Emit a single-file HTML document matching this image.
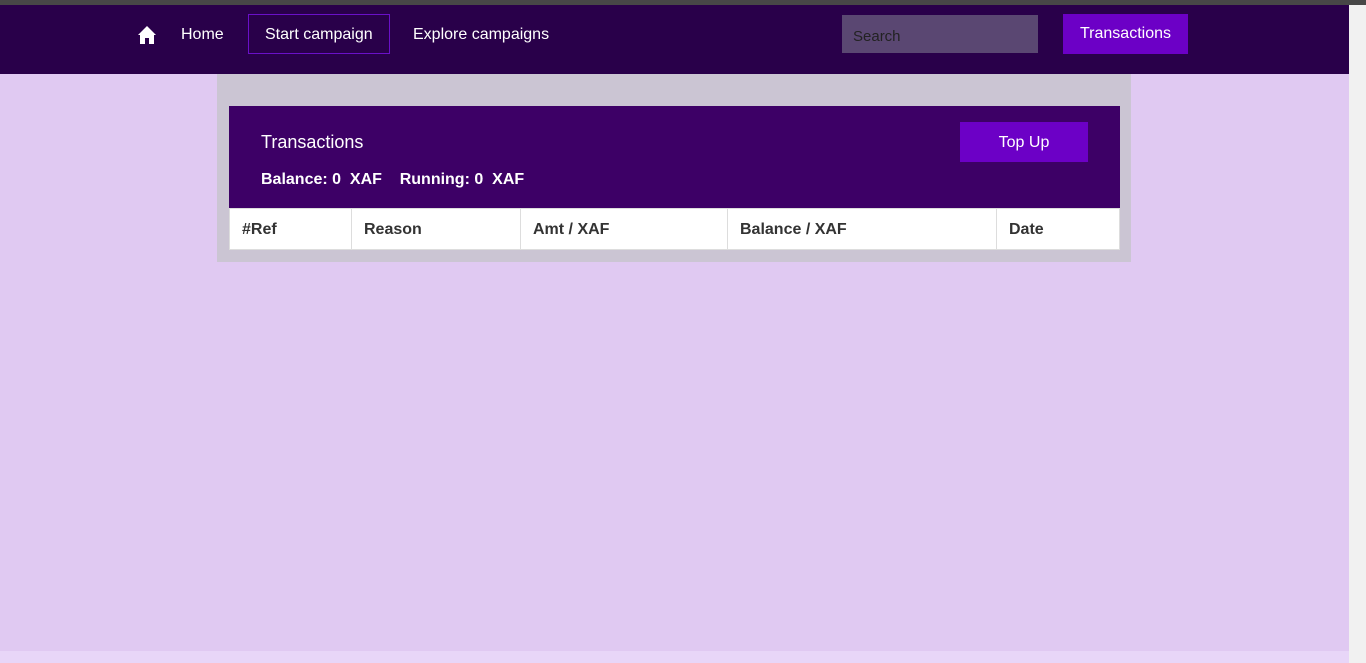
<!DOCTYPE html>
<html><head><style>
*{margin:0;padding:0;box-sizing:border-box}
body{width:1366px;height:663px;overflow:hidden;background:#e0c9f2;font-family:"Liberation Sans",sans-serif;position:relative}
.top{position:absolute;left:0;top:0;width:1366px;height:5px;background:#474747}
.nav{position:absolute;left:0;top:5px;width:1349px;height:69px;background:#29004a;color:#fff;font-size:16px}
.nav span{position:absolute;top:21px}
.sc{position:absolute;right:0;top:5px;width:17px;height:658px;background:#f1f1f1}
.bot{position:absolute;left:0;top:651px;width:1349px;height:12px;background:#e8d6f8}
.panel{position:absolute;left:217px;top:74px;width:914px;height:188px;background:#cbc5d3}
.head{position:absolute;left:229px;top:106px;width:891px;height:102px;background:#3d0066;color:#fff}
table{position:absolute;left:229px;top:208px;width:891px;height:42px;border-collapse:collapse;background:#fff}
td{border:1px solid #ddd;font-weight:bold;font-size:16px;color:#333;padding:1px 12px 0}
</style></head><body>
<div class="top"></div>
<div class="nav">
<svg style="position:absolute;left:137px;top:20px" width="20" height="20" viewBox="0 0 20 20"><path d="M10 1 L19 10 L17 10 L17 19 L12 19 L12 13 L8 13 L8 19 L3 19 L3 10 L1 10 Z" fill="#fff"/></svg>
<span style="left:181px">Home</span>
<div style="position:absolute;left:248px;top:9px;width:142px;height:40px;border:1px solid #6a10c8"></div>
<span style="left:265px">Start campaign</span>
<span style="left:413px">Explore campaigns</span>
<div style="position:absolute;left:842px;top:10px;width:196px;height:38px;background:#5a4772;color:#222;font-size:15px;padding:13px 11px">Search</div>
<div style="position:absolute;left:1063px;top:9px;width:125px;height:40px;background:#6c00c6;font-size:16px;padding:11px 0;text-align:center">Transactions</div>
</div>
<div class="sc"></div>
<div class="bot"></div>
<div class="panel"></div>
<div class="head">
<div style="position:absolute;left:32px;top:26px;font-size:18px">Transactions</div>
<div style="position:absolute;left:32px;top:65px;font-size:16px;font-weight:bold;white-space:pre">Balance: 0  XAF    Running: 0  XAF</div>
<div style="position:absolute;left:731px;top:16px;width:128px;height:40px;background:#6c00c6;font-size:16px;text-align:center;padding-top:12px">Top Up</div>
</div>
<table><tr>
<td style="width:122px">#Ref</td><td style="width:169px">Reason</td><td style="width:207px">Amt / XAF</td><td style="width:269px">Balance / XAF</td><td>Date</td>
</tr></table>
</body></html>
